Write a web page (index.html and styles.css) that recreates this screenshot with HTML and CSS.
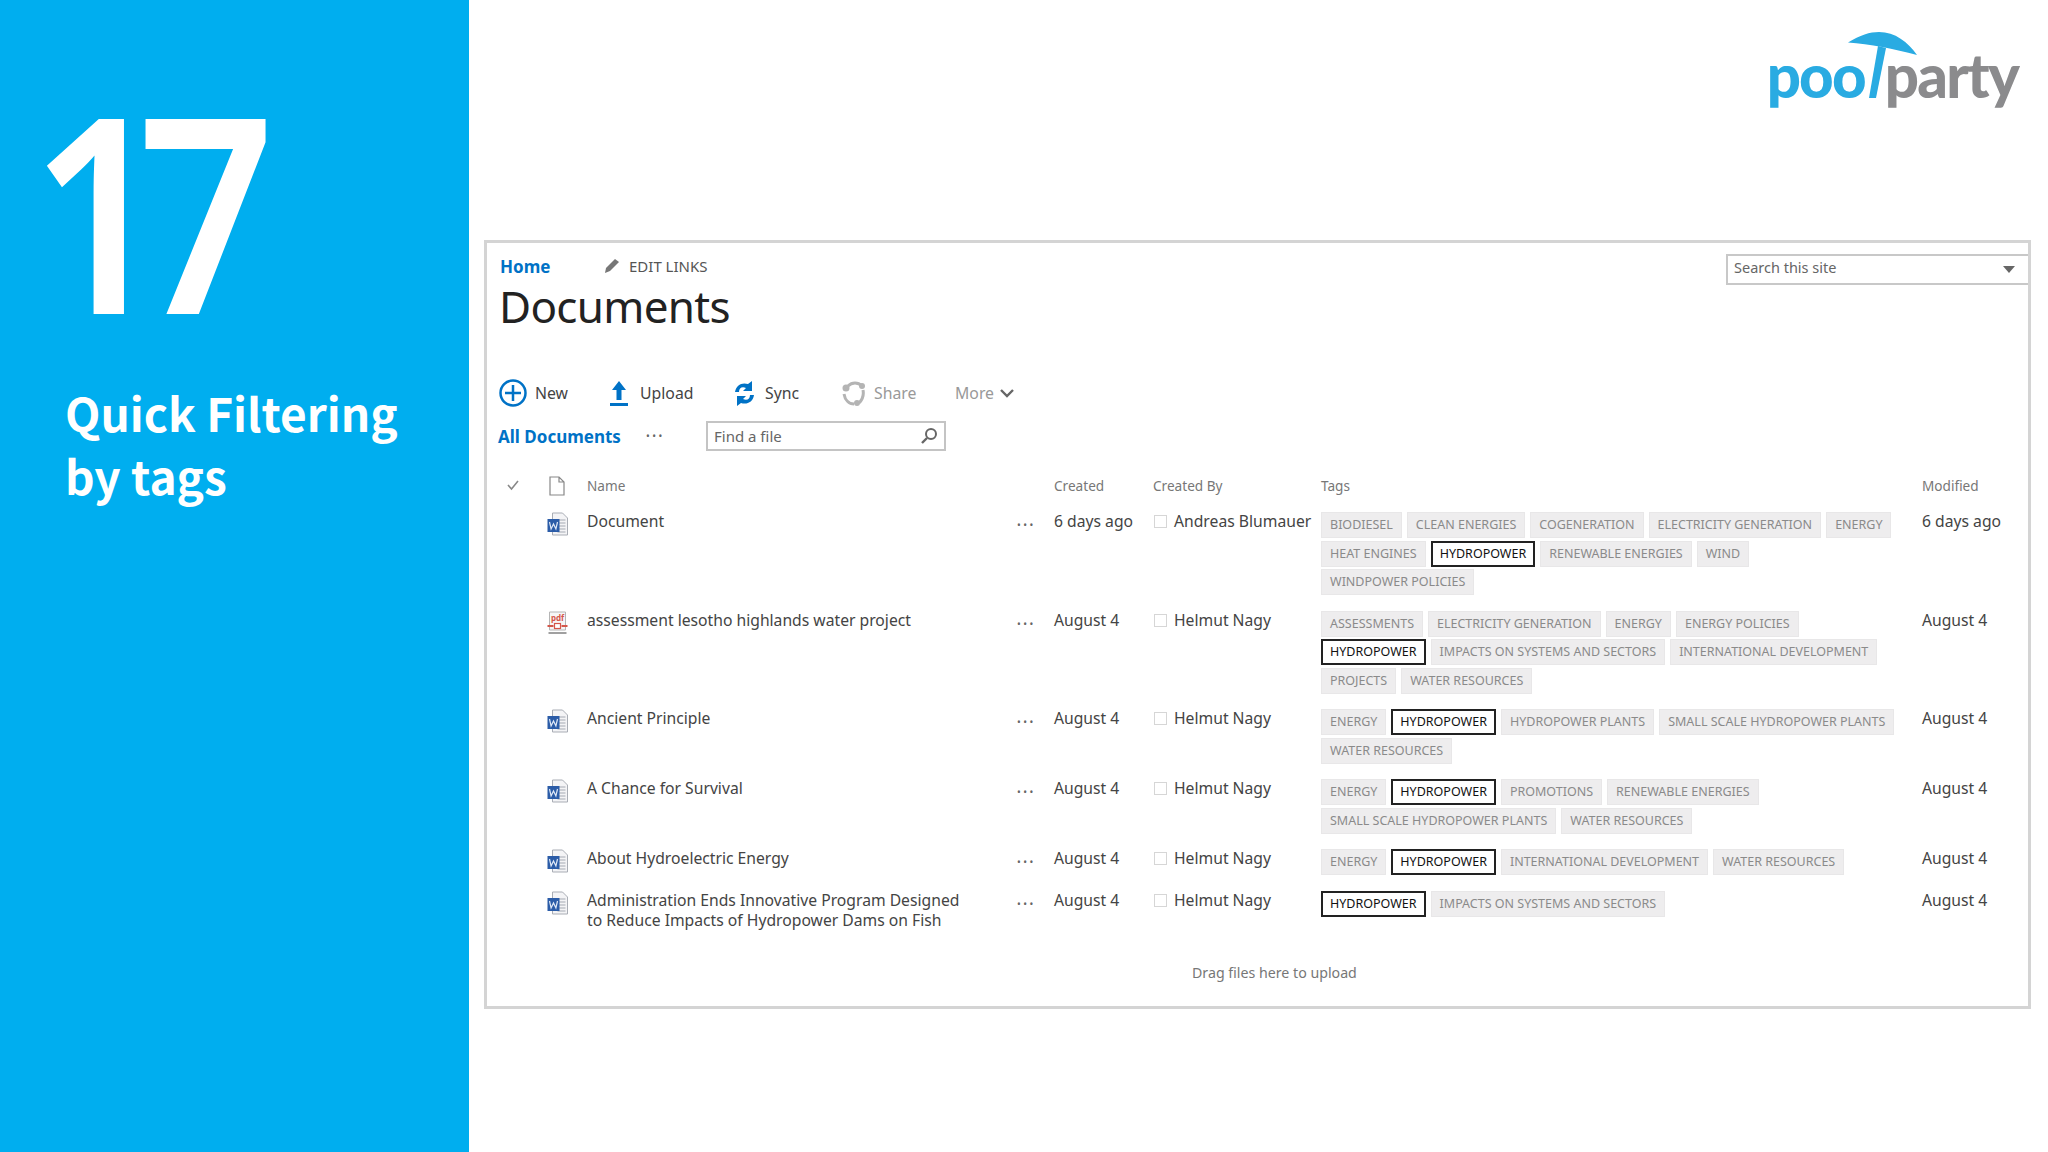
FILE: index.html
```html
<!DOCTYPE html>
<html lang="en">
<head>
  <meta charset="UTF-8" />
  <title>Quick Filtering by tags</title>
  <link rel="stylesheet" href="styles.css">
</head>
<body>
  <svg class="defs" width="0" height="0">
    <symbol id="word" viewBox="0 0 22 24">
      <path d="M6 1h10l5 5v17H6z" fill="#f4f4f6" stroke="#a9adb5"/>
      <path d="M11 8h8M11 11h8M11 14h8M11 17h8M11 20h8" stroke="#a4a9b2"/>
      <rect x="1" y="7" width="12" height="13" fill="#2b5ca8"/>
      <path d="M3 10l1.6 7 2.4-5 2.4 5 1.6-7" fill="none" stroke="#dfe8f6" stroke-width="1.2"/>
    </symbol>
  </svg>

  <div class="slide">
    <aside class="side">
      <div class="num">17</div>
      <div class="side-title">Quick Filtering<br>by tags</div>
    </aside>

    <main class="main">
      <div class="logo-bar">
        <div class="logo">
          <svg class="brolly" width="69" height="66" viewBox="0 0 69 66">
            <path d="M0 10.500C12 3 22 0 31 0C47 0 60 10 69 23C46 17 22 12 0 10.500Z" fill="#29abe2"/>
            <path d="M30 14L38 16L28 66L21 66Z" fill="#29abe2"/>
          </svg>
          <span class="logo-blue">poo</span><span class="logo-gap"></span><span class="logo-grey">party</span>
        </div>
      </div>

      <section class="panel">
        <div class="top">
          <div>
            <div class="crumbs">
              <a class="home">Home</a>
              <span class="edit">
                <svg width="16" height="16" viewBox="0 0 16 16"><path d="M1 15l1-5L11 1l4 3-9 9z" fill="#777"/></svg>
                EDIT LINKS
              </span>
            </div>
            <h1>Documents</h1>
          </div>
          <div class="site-search">
            <span>Search this site</span>
            <i class="caret"></i>
          </div>
        </div>

        <div class="toolbar">
          <span class="tool t-new">
            <svg width="28" height="28" viewBox="0 0 28 28"><circle cx="14" cy="14" r="12.500" fill="none" stroke="#0072c6" stroke-width="2.500"/><path d="M14 6v16M6 14h16" stroke="#0072c6" stroke-width="2.500"/></svg>
            New
          </span>
          <span class="tool t-upload">
            <svg width="20" height="26" viewBox="0 0 20 26"><path d="M10 1l7 9h-4.500v10h-5V10H3z" fill="#0072c6"/><rect x="1" y="23" width="18" height="3" fill="#0072c6"/></svg>
            Upload
          </span>
          <span class="tool t-sync">
            <svg width="23" height="27" viewBox="0 0 23 27"><path d="M2 12C3 5 9 2 15 4l4-3v10h-9l3-3C9 6 6 8 6 12z" fill="#0072c6"/><path d="M21 15c-1 7-7 10-13 8l-4 3V16h9l-3 3c4 2 7 0 7-4z" fill="#0072c6"/></svg>
            Sync
          </span>
          <span class="tool t-share off">
            <svg width="25" height="26" viewBox="0 0 25 26"><path d="M7 6C11 2 17 2 21 6M22 10c1 5 0 9-4 13M13 24C8 24 4 20 3 14" fill="none" stroke="#b4b4b4" stroke-width="3"/><circle cx="5" cy="8" r="3.500" fill="#b4b4b4"/><circle cx="21" cy="6" r="3" fill="#b4b4b4"/><circle cx="16" cy="23" r="3" fill="#b4b4b4"/></svg>
            Share
          </span>
          <span class="tool t-more off">
            More
            <svg width="14" height="10" viewBox="0 0 14 10"><path d="M1 2l6 6 6-6" fill="none" stroke="#666" stroke-width="2.400"/></svg>
          </span>
        </div>

        <div class="views">
          <a class="all-docs">All Documents</a>
          <span class="dots">•••</span>
          <div class="find">
            <span>Find a file</span>
            <svg width="18" height="18" viewBox="0 0 18 18"><circle cx="11" cy="7" r="5" fill="none" stroke="#666" stroke-width="2"/><path d="M7 11l-5 5" stroke="#666" stroke-width="2.400"/></svg>
          </div>
        </div>

        <div class="row head">
          <div class="c-icon">
            <svg class="tick" width="14" height="12" viewBox="0 0 14 12"><path d="M2 6l3.500 4L12 2" fill="none" stroke="#888" stroke-width="1.600"/></svg>
            <svg class="file" width="16" height="20" viewBox="0 0 16 20"><path d="M1 1h9l5 5v13H1zM10 1v5h5" fill="none" stroke="#888" stroke-width="1.200"/></svg>
          </div>
          <div>Name</div>
          <div></div>
          <div>Created</div>
          <div>Created By</div>
          <div>Tags</div>
          <div>Modified</div>
        </div>

        <div class="row">
          <div class="c-icon"><svg class="doc" width="23" height="24"><use href="#word"/></svg></div>
          <div class="name">Document</div>
          <div class="dots">•••</div>
          <div>6 days ago</div>
          <div class="by"><i class="box"></i>Andreas Blumauer</div>
          <div class="tags">
            <span class="tag">BIODIESEL</span><span class="tag">CLEAN ENERGIES</span><span class="tag">COGENERATION</span><span class="tag">ELECTRICITY GENERATION</span><span class="tag">ENERGY</span><span class="tag">HEAT ENGINES</span><span class="tag on">HYDROPOWER</span><span class="tag">RENEWABLE ENERGIES</span><span class="tag">WIND</span><span class="tag">WINDPOWER POLICIES</span>
          </div>
          <div>6 days ago</div>
        </div>

        <div class="row">
          <div class="c-icon">
            <svg class="doc" width="23" height="24" viewBox="0 0 22 24"><path d="M3 1h16v18H3z" fill="#f6f6f6" stroke="#b5b5b5"/><text x="11" y="10" class="pdf">pdf</text><path d="M1 15h6M15 15h6" stroke="#d4574a" stroke-width="2"/><rect x="8" y="12.500" width="6" height="5" fill="#fff" stroke="#d4574a" stroke-width="1.200"/><path d="M2 22h18" stroke="#777" stroke-width="1.400"/></svg>
          </div>
          <div class="name">assessment lesotho highlands water project</div>
          <div class="dots">•••</div>
          <div>August 4</div>
          <div class="by"><i class="box"></i>Helmut Nagy</div>
          <div class="tags">
            <span class="tag">ASSESSMENTS</span><span class="tag">ELECTRICITY GENERATION</span><span class="tag">ENERGY</span><span class="tag">ENERGY POLICIES</span><span class="tag on">HYDROPOWER</span><span class="tag">IMPACTS ON SYSTEMS AND SECTORS</span><span class="tag">INTERNATIONAL DEVELOPMENT</span><span class="tag">PROJECTS</span><span class="tag">WATER RESOURCES</span>
          </div>
          <div>August 4</div>
        </div>

        <div class="row">
          <div class="c-icon"><svg class="doc" width="23" height="24"><use href="#word"/></svg></div>
          <div class="name">Ancient Principle</div>
          <div class="dots">•••</div>
          <div>August 4</div>
          <div class="by"><i class="box"></i>Helmut Nagy</div>
          <div class="tags">
            <span class="tag">ENERGY</span><span class="tag on">HYDROPOWER</span><span class="tag">HYDROPOWER PLANTS</span><span class="tag">SMALL SCALE HYDROPOWER PLANTS</span><span class="tag">WATER RESOURCES</span>
          </div>
          <div>August 4</div>
        </div>

        <div class="row">
          <div class="c-icon"><svg class="doc" width="23" height="24"><use href="#word"/></svg></div>
          <div class="name">A Chance for Survival</div>
          <div class="dots">•••</div>
          <div>August 4</div>
          <div class="by"><i class="box"></i>Helmut Nagy</div>
          <div class="tags">
            <span class="tag">ENERGY</span><span class="tag on">HYDROPOWER</span><span class="tag">PROMOTIONS</span><span class="tag">RENEWABLE ENERGIES</span><span class="tag">SMALL SCALE HYDROPOWER PLANTS</span><span class="tag">WATER RESOURCES</span>
          </div>
          <div>August 4</div>
        </div>

        <div class="row">
          <div class="c-icon"><svg class="doc" width="23" height="24"><use href="#word"/></svg></div>
          <div class="name">About Hydroelectric Energy</div>
          <div class="dots">•••</div>
          <div>August 4</div>
          <div class="by"><i class="box"></i>Helmut Nagy</div>
          <div class="tags">
            <span class="tag">ENERGY</span><span class="tag on">HYDROPOWER</span><span class="tag">INTERNATIONAL DEVELOPMENT</span><span class="tag">WATER RESOURCES</span>
          </div>
          <div>August 4</div>
        </div>

        <div class="row">
          <div class="c-icon"><svg class="doc" width="23" height="24"><use href="#word"/></svg></div>
          <div class="name">Administration Ends Innovative Program Designed to Reduce Impacts of Hydropower Dams on Fish</div>
          <div class="dots">•••</div>
          <div>August 4</div>
          <div class="by"><i class="box"></i>Helmut Nagy</div>
          <div class="tags">
            <span class="tag on">HYDROPOWER</span><span class="tag">IMPACTS ON SYSTEMS AND SECTORS</span>
          </div>
          <div>August 4</div>
        </div>

        <div class="drop">Drag files here to upload</div>
      </section>
    </main>
  </div>
</body>
</html>
```

FILE: styles.css
```css
* { margin: 0; padding: 0; box-sizing: border-box; }
html, body { height: 100%; width: 100%; background: #fff; overflow: hidden; }
body { font-family: "Noto Sans", Arial, sans-serif; color: #444; }
.defs { position: absolute; }

.slide {
  display: flex;
  width: 2048px;
  height: 1152px;
}

/* blue column */
.side {
  width: 469px;
  flex: none;
  background: #00aeef;
  color: #fff;
  font-family: "Noto Sans CJK JP", "Noto Sans", sans-serif;
  font-weight: 700;
}

.num {
  font-family: "Noto Sans", sans-serif;
  font-size: 273px;
  line-height: 200px;
  font-weight: 600;
  letter-spacing: -34px;
  margin: 108px 0 0 30px;
  transform: scaleX(0.88);
  transform-origin: left;
}

.side-title {
  font-size: 46px;
  line-height: 63px;
  margin: 73px 0 0 65px;
}

.main {
  flex: 1;
  padding-left: 15px;
}

/* logo */
.logo-bar {
  height: 240px;
  display: flex;
  justify-content: flex-end;
  padding: 40px 30px 0 0;
}

.logo {
  position: relative;
  height: 70px;
  font-family: Lato, sans-serif;
  font-weight: 900;
  font-size: 60px;
  line-height: 70px;
  letter-spacing: -1.800px;
}

.logo-blue { color: #29abe2; }
.logo-grey { color: #8b8b8d; }
.logo-gap { display: inline-block; width: 20px; }

.brolly {
  position: absolute;
  left: 81px;
  top: -8px;
  overflow: visible;
}

/* sharepoint window */
.panel {
  width: 1547px;
  height: 769px;
  border: 3px solid #d4d4d4;
  padding-left: 13px;
  overflow: hidden;
}

.top {
  display: flex;
  justify-content: space-between;
  align-items: flex-start;
}

.crumbs {
  display: flex;
  align-items: center;
  height: 22px;
  margin-top: 12px;
  font-size: 15px;
}

.home {
  color: #0072c6;
  font-weight: 700;
  font-size: 17px;
  width: 104px;
}

.edit {
  display: flex;
  align-items: center;
  gap: 9px;
  color: #555;
}

h1 {
  font-weight: 400;
  font-size: 44px;
  line-height: 60px;
  color: #222;
  letter-spacing: -0.700px;
  margin: -1px 0 0 -1px;
}

.site-search {
  width: 302px;
  height: 31px;
  margin-top: 11px;
  border: 2px solid #c8c8c8;
  border-right: 0;
  display: flex;
  align-items: center;
  justify-content: space-between;
  padding: 0 13px 5px 6px;
  font-size: 14.500px;
  color: #666;
}

.caret {
  width: 0;
  height: 0;
  border: 6px solid transparent;
  border-top: 7px solid #666;
  border-bottom: 0;
  margin-top: 5px;
}

.toolbar {
  display: flex;
  align-items: center;
  height: 32px;
  margin-top: 41px;
  font-size: 15.800px;
}

.tool {
  display: flex;
  align-items: center;
  gap: 8px;
}

.t-new { width: 110px; margin-left: -1px; }
.t-upload { width: 124px; gap: 11px; }
.t-sync { width: 108px; gap: 9px; }
.t-share { width: 114px; }
.t-more { gap: 6px; }
.off { color: #999; }

.views {
  display: flex;
  align-items: center;
  height: 30px;
  margin-top: 12px;
}

.all-docs {
  color: #0072c6;
  font-weight: 700;
  font-size: 17px;
  width: 148px;
  margin-left: -2px;
}

.dots {
  font-size: 10px;
  letter-spacing: 2.500px;
  color: #666;
}

.views .dots { width: 60px; }

.find {
  width: 240px;
  height: 30px;
  border: 2px solid #c4c4c4;
  display: flex;
  align-items: center;
  justify-content: space-between;
  padding: 0 6px;
  font-size: 15px;
  color: #666;
}

/* list */
.row {
  display: grid;
  grid-template-columns: 87px 430px 37px 99px 168px 601px 1fr;
  font-size: 15.700px;
  line-height: 20px;
  padding-top: 3px;
  padding-bottom: 11.500px;
}

.head {
  font-size: 13.600px;
  color: #777;
  height: 57px;
  padding-top: 25px;
  padding-bottom: 0;
}

.c-icon {
  position: relative;
  height: 24px;
}

.tick { position: absolute; left: 6px; top: 3px; }
.file { position: absolute; left: 49px; top: 0; }
.doc { position: absolute; left: 46px; top: 1px; }

.pdf {
  font-size: 8px;
  font-weight: 700;
  fill: #d4574a;
  text-anchor: middle;
}

.name { max-width: 385px; }

.row > .dots { padding-top: 4px; }

.by { display: flex; }

.box {
  width: 13px;
  height: 13px;
  border: 1px solid #d6d6d6;
  margin: 4px 7px 0 1px;
}

.tags {
  display: flex;
  flex-wrap: wrap;
  align-content: flex-start;
  gap: 2.500px 5px;
  max-width: 580px;
  margin-top: 1px;
}

.tag {
  height: 26px;
  line-height: 24px;
  padding: 0 8px;
  background: #eeedee;
  border: 1px solid #e8e7e8;
  color: #8a8a8a;
  font-size: 12.500px;
}

.tag.on {
  background: #fff;
  border: 2px solid #222;
  line-height: 22px;
  padding: 0 7px;
  color: #111;
}

.drop {
  margin-left: 692px;
  margin-top: 22px;
  font-size: 14.200px;
  color: #777;
}
```
